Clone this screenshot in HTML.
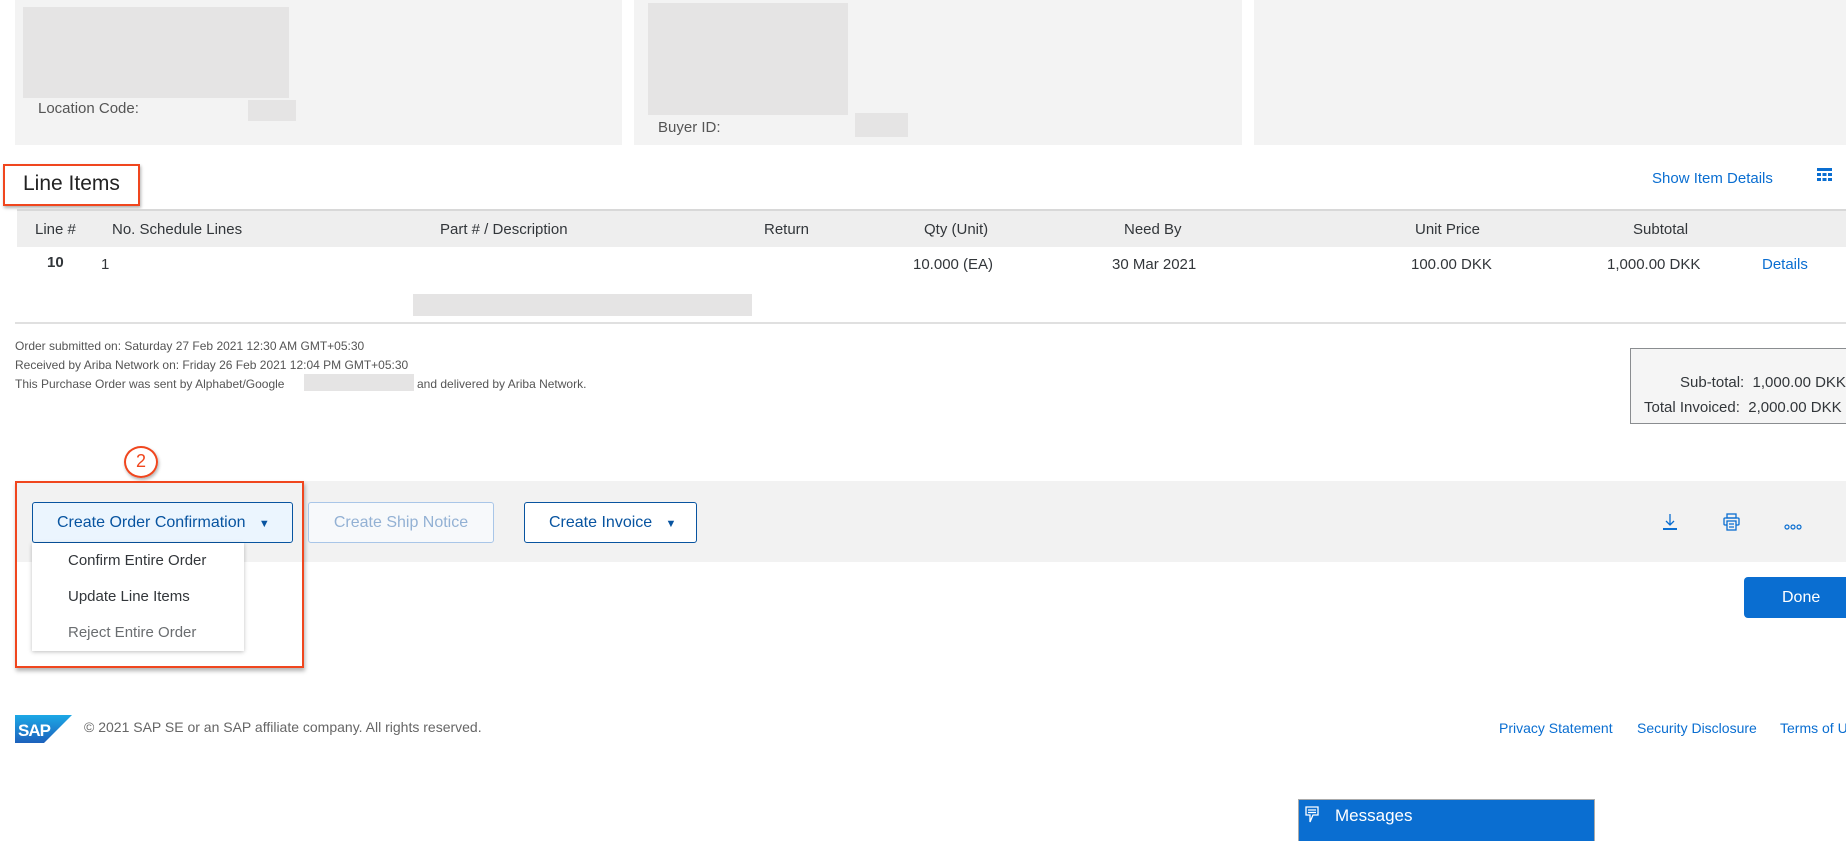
<!DOCTYPE html>
<html><head><meta charset="utf-8"><style>
*{margin:0;padding:0;box-sizing:border-box}
body{width:1846px;height:841px;position:relative;overflow:hidden;background:#fff;font-family:"Liberation Sans",sans-serif;color:#32363a}
.a{position:absolute;white-space:nowrap}
.g{position:absolute;background:#e5e4e4}
.p{position:absolute;background:#f3f3f3}
.t{font-size:15px;color:#32363a}
.lnk{color:#0a6ed1}
.s{font-size:12px;color:#555}
</style></head><body>
<div class="p" style="left:15px;top:0;width:607px;height:145px"></div>
<div class="p" style="left:634px;top:0;width:608px;height:145px"></div>
<div class="p" style="left:1254px;top:0;width:592px;height:145px"></div>
<div class="g" style="left:23px;top:7px;width:266px;height:91px"></div>
<div class="g" style="left:248px;top:100px;width:48px;height:21px"></div>
<div class="a t" style="left:38px;top:100px;color:#555">Location Code:</div>
<div class="g" style="left:648px;top:3px;width:200px;height:112px"></div>
<div class="g" style="left:855px;top:113px;width:53px;height:24px"></div>
<div class="a t" style="left:658px;top:119px;color:#555">Buyer ID:</div>

<div class="a" style="left:3px;top:164px;width:137px;height:42px;border:2px solid #f0461e;box-shadow:1px 2px 3px rgba(0,0,0,.3)"></div>
<div class="a" style="left:23px;top:172px;font-size:21px;color:#222">Line Items</div>
<div class="a t lnk" style="left:1652px;top:170px">Show Item Details</div>
<svg class="a" style="left:1817px;top:168px" width="15" height="14"><rect x="0" y="0" width="15" height="3" fill="#0a6ed1"/><g fill="#0a6ed1"><rect x="0" y="5" width="4" height="3"/><rect x="5.5" y="5" width="4" height="3"/><rect x="11" y="5" width="4" height="3"/><rect x="0" y="10" width="4" height="3"/><rect x="5.5" y="10" width="4" height="3"/><rect x="11" y="10" width="4" height="3"/></g></svg>

<div class="a" style="left:17px;top:209px;width:1829px;height:38px;background:#eee;border-top:2px solid #d8d8d8"></div>
<div class="a t" style="left:35px;top:221px">Line #</div>
<div class="a t" style="left:112px;top:221px">No. Schedule Lines</div>
<div class="a t" style="left:440px;top:221px">Part # / Description</div>
<div class="a t" style="left:764px;top:221px">Return</div>
<div class="a t" style="left:924px;top:221px">Qty (Unit)</div>
<div class="a t" style="left:1124px;top:221px">Need By</div>
<div class="a t" style="left:1415px;top:221px">Unit Price</div>
<div class="a t" style="left:1633px;top:221px">Subtotal</div>
<div class="a t" style="left:47px;top:254px;font-weight:bold">10</div>
<div class="a t" style="left:101px;top:256px">1</div>
<div class="a t" style="left:913px;top:256px">10.000 (EA)</div>
<div class="a t" style="left:1112px;top:256px">30 Mar 2021</div>
<div class="a t" style="left:1411px;top:256px">100.00 DKK</div>
<div class="a t" style="left:1607px;top:256px">1,000.00 DKK</div>
<div class="a t lnk" style="left:1762px;top:256px">Details</div>
<div class="g" style="left:413px;top:294px;width:339px;height:22px"></div>
<div class="a" style="left:15px;top:322px;width:1831px;height:2px;background:#e0e0e0"></div>

<div class="a s" style="left:15px;top:339px">Order submitted on: Saturday 27 Feb 2021 12:30 AM GMT+05:30</div>
<div class="a s" style="left:15px;top:358px">Received by Ariba Network on: Friday 26 Feb 2021 12:04 PM GMT+05:30</div>
<div class="a s" style="left:15px;top:377px">This Purchase Order was sent by Alphabet/Google</div>
<div class="g" style="left:304px;top:374px;width:110px;height:17px"></div>
<div class="a s" style="left:417px;top:377px">and delivered by Ariba Network.</div>

<div class="a" style="left:1630px;top:348px;width:230px;height:76px;background:#f5f5f5;border:1px solid #8a8d90"></div>
<div class="a t" style="left:1680px;top:374px">Sub-total:&nbsp; 1,000.00 DKK</div>
<div class="a t" style="left:1644px;top:399px">Total Invoiced:&nbsp; 2,000.00 DKK</div>

<div class="a" style="left:124px;top:446px;width:34px;height:32px;border:2.5px solid #f0461e;border-radius:50%;box-shadow:1px 2px 3px rgba(0,0,0,.3);font-size:18px;color:#f0461e;text-align:center;line-height:27px">2</div>

<div class="a" style="left:15px;top:481px;width:1831px;height:81px;background:#f2f2f2"></div>
<div class="a" style="left:15px;top:481px;width:289px;height:187px;border:2.5px solid #f0461e;box-shadow:1px 3px 4px rgba(0,0,0,.3)"></div>
<div class="a" style="left:32px;top:502px;width:261px;height:41px;background:#ebf5fe;border:1px solid #0854a0;border-radius:3px;color:#0854a0;font-size:16px;line-height:39px;padding-left:24px">Create Order Confirmation&nbsp;&nbsp; <span style="font-size:11px">▼</span></div>
<div class="a" style="left:308px;top:502px;width:186px;height:41px;background:#f7f9fb;border:1px solid #a9c6e8;border-radius:3px;color:#93b1d4;font-size:16px;line-height:39px;text-align:center">Create Ship Notice</div>
<div class="a" style="left:524px;top:502px;width:173px;height:41px;background:#fff;border:1px solid #0854a0;border-radius:3px;color:#0854a0;font-size:16px;line-height:39px;padding-left:24px">Create Invoice&nbsp;&nbsp; <span style="font-size:11px">▼</span></div>
<div class="a" style="left:32px;top:543px;width:212px;height:108px;background:#fff;box-shadow:0 1px 4px rgba(0,0,0,.25)"></div>
<div class="a" style="left:68px;top:552px;font-size:15px;color:#32363a">Confirm Entire Order</div>
<div class="a" style="left:68px;top:588px;font-size:15px;color:#32363a">Update Line Items</div>
<div class="a" style="left:68px;top:624px;font-size:15px;color:#6a6d70">Reject Entire Order</div>

<svg class="a" style="left:1662px;top:513px" width="16" height="18"><path d="M8 1V12M4 8L8 12L12 8" stroke="#0a6ed1" stroke-width="1.3" fill="none"/><rect x="1" y="15" width="14" height="2" fill="#0a6ed1"/></svg>
<svg class="a" style="left:1723px;top:513px" width="17" height="18"><g stroke="#0a6ed1" stroke-width="1.3" fill="none"><rect x="4" y="1" width="9" height="4"/><rect x="1" y="5" width="15" height="7" rx="1"/><rect x="4" y="8" width="9" height="9" fill="#f2f2f2"/><path d="M6 11H11M6 14H11"/></g></svg>
<svg class="a" style="left:1784px;top:524px" width="18" height="6"><g stroke="#0a6ed1" stroke-width="1.2" fill="none"><circle cx="3" cy="3" r="2"/><circle cx="9" cy="3" r="2"/><circle cx="15" cy="3" r="2"/></g></svg>

<div class="a" style="left:1744px;top:577px;width:110px;height:41px;background:#0a6ed1;border-radius:4px;color:#fff;font-size:16px;line-height:41px;padding-left:38px">Done</div>

<svg class="a" style="left:15px;top:715px" width="57" height="28"><defs><linearGradient id="sg" x1="0" y1="0" x2="0" y2="1"><stop offset="0" stop-color="#1ca8e6"/><stop offset="1" stop-color="#1d61bc"/></linearGradient></defs><path d="M0 0H57L29 28H0Z" fill="url(#sg)"/><text x="3" y="21" font-family="Liberation Sans" font-weight="bold" font-size="17" fill="#fff" letter-spacing="-1">SAP</text></svg>
<div class="a" style="left:84px;top:719px;font-size:14px;color:#666">© 2021 SAP SE or an SAP affiliate company. All rights reserved.</div>
<div class="a lnk" style="left:1499px;top:720px;font-size:14px">Privacy Statement</div>
<div class="a lnk" style="left:1637px;top:720px;font-size:14px">Security Disclosure</div>
<div class="a lnk" style="left:1780px;top:720px;font-size:14px">Terms of Use</div>

<div class="a" style="left:1298px;top:799px;width:297px;height:42px;background:#0a6ed1;border:1px solid #aaa;border-bottom:none"></div>
<svg class="a" style="left:1305px;top:806px" width="14" height="18"><path d="M1 1H13V9H8L5 16V9H1Z" stroke="#fff" stroke-width="1.3" fill="none"/><path d="M3 4H11M3 6.5H11" stroke="#fff" stroke-width="1.2"/></svg>
<div class="a" style="left:1335px;top:806px;font-size:17px;color:#fff">Messages</div>
</body></html>
